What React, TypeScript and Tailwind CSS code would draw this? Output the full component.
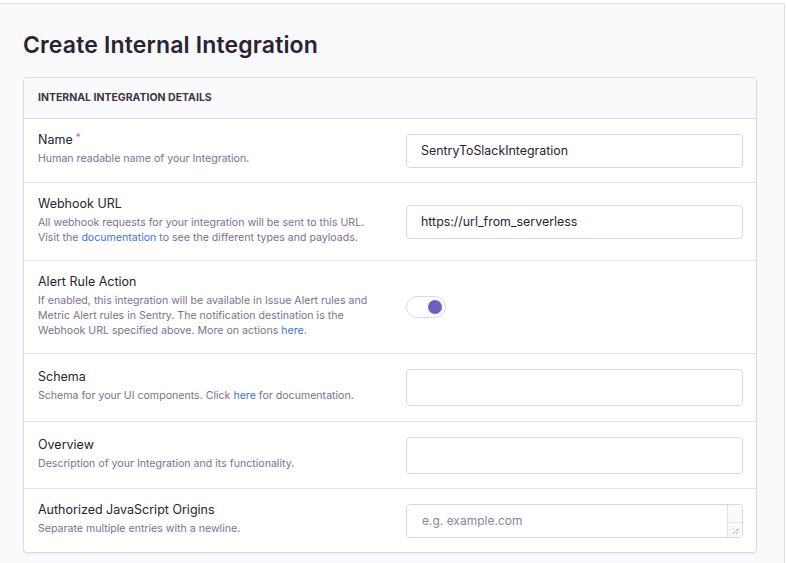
import React from "react";

interface FieldRowProps {
  label: string;
  required?: boolean;
  help: React.ReactNode;
  rowHeight: string;
  children: React.ReactNode;
  last?: boolean;
}

function FieldRow({ label, required, help, rowHeight, children, last }: FieldRowProps) {
  return (
    <div
      className={`flex items-center pl-[14px] pr-[13px] ${rowHeight} ${
        last ? "" : "border-b border-[#e7e1ec]"
      }`}
    >
      <div className="flex-1 pb-[4px]">
        <div className="flex items-start text-[12.5px] leading-[18px] text-[#2b2233]">
          {label}
          {required && (
            <span className="ml-[3px] text-[10px] leading-[12px] text-[#f55459]">*</span>
          )}
        </div>
        <div className="mt-[2px] whitespace-nowrap text-[10.6px] leading-[15px] text-[#80708f]">
          {help}
        </div>
      </div>
      <div className="w-[337px]">{children}</div>
    </div>
  );
}

function TextInput({ value, height = "h-[34px]" }: { value?: string; height?: string }) {
  return (
    <input
      readOnly
      defaultValue={value}
      className={`w-full ${height} rounded-[4px] border border-[#dcd6e2] bg-white px-[14px] text-[12.4px] text-[#2b2233] outline-none`}
      style={{ fontFamily: "Inter, 'Noto Sans', sans-serif" }}
    />
  );
}

function Toggle({ on }: { on: boolean }) {
  return (
    <div
      className={`flex h-[22px] w-[40px] items-center rounded-full border border-[#dbd6e1] bg-white px-[3px] ${
        on ? "justify-end" : "justify-start"
      }`}
    >
      <div className="h-[14px] w-[14px] rounded-full bg-[#6c5fc7]" />
    </div>
  );
}

function OriginsTextarea() {
  return (
    <div className="flex h-[34px] w-full overflow-hidden rounded-[4px] border border-[#dcd6e2] bg-white">
      <div className="flex flex-1 items-center px-[15px] text-[12px] text-[#8e82a0]">
        e.g. example.com
      </div>
      <div className="flex w-[15px] flex-col border-l border-[#e4e0e8] bg-[#fafafa]">
        <div className="flex-1" />
        <div className="flex h-[15px] items-end justify-end border-t border-[#e4e0e8] p-[2px]">
          <svg width="8" height="8" viewBox="0 0 8 8">
            <path d="M1 7 L7 1 M4 7 L7 4" stroke="#555" strokeWidth="0.8" strokeDasharray="1 1" />
          </svg>
        </div>
      </div>
    </div>
  );
}

export default function App() {
  return (
    <div
      className="h-[563px] w-[787px] overflow-hidden bg-white"
      style={{ fontFamily: "Inter, 'Noto Sans', sans-serif" }}
    >
      <div className="mt-[3px] h-[560px] w-[785px] border-t border-r border-[#e2dee6] bg-[#faf9fb] pl-[23px] pr-[27px]">
        <h1 className="pt-[27px] text-[23px] font-semibold leading-[29px] tracking-[0.15px] text-[#2b2233]">
          Create Internal Integration
        </h1>
        <div className="mt-[17px] overflow-hidden rounded-[4px] border border-[#ddd8e3] bg-white shadow-[0_1px_2px_rgba(43,34,51,0.06)]">
          <div className="flex h-[41px] items-center border-b border-[#ddd8e3] bg-[#faf9fb] pb-[1px] pl-[14px] text-[10.5px] font-bold uppercase text-[#3e3446]">
            Internal Integration Details
          </div>

          <FieldRow
            label="Name"
            required
            rowHeight="h-[64px]"
            help="Human readable name of your Integration."
          >
            <TextInput value="SentryToSlackIntegration" />
          </FieldRow>

          <FieldRow
            label="Webhook URL"
            rowHeight="h-[78px]"
            help={
              <>
                All webhook requests for your integration will be sent to this URL.
                <br />
                Visit the <span className="text-[#3d74db]">documentation</span> to see the
                different types and payloads.
              </>
            }
          >
            <TextInput value="https://url_from_serverless" />
          </FieldRow>

          <FieldRow
            label="Alert Rule Action"
            rowHeight="h-[93px]"
            help={
              <>
                If enabled, this integration will be available in Issue Alert rules and
                <br />
                Metric Alert rules in Sentry. The notification destination is the
                <br />
                Webhook URL specified above. More on actions{" "}
                <span className="text-[#3d74db]">here</span>.
              </>
            }
          >
            <Toggle on />
          </FieldRow>

          <FieldRow
            label="Schema"
            rowHeight="h-[68px]"
            help={
              <>
                Schema for your UI components. Click{" "}
                <span className="text-[#3d74db]">here</span> for documentation.
              </>
            }
          >
            <TextInput height="h-[37px]" />
          </FieldRow>

          <FieldRow
            label="Overview"
            rowHeight="h-[67px]"
            help="Description of your Integration and its functionality."
          >
            <TextInput height="h-[37px]" />
          </FieldRow>

          <FieldRow
            label="Authorized JavaScript Origins"
            rowHeight="h-[63px]"
            help="Separate multiple entries with a newline."
            last
          >
            <OriginsTextarea />
          </FieldRow>
        </div>
      </div>
    </div>
  );
}
